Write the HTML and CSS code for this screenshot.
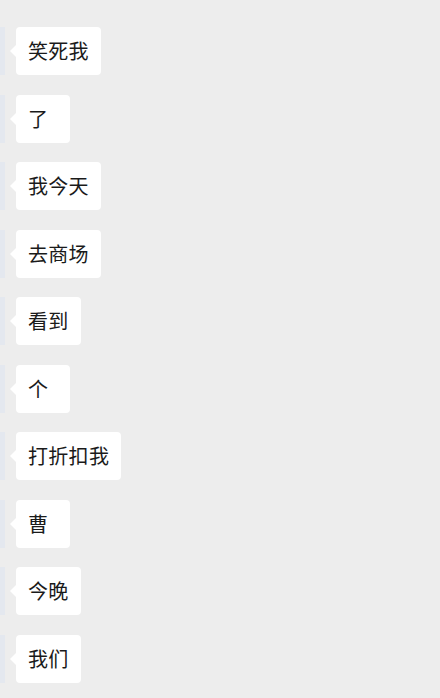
FILE: index.html
```html
<!DOCTYPE html>
<html lang="zh-CN">
<head>
    <meta charset="UTF-8">
    <meta name="viewport" content="width=device-width, initial-scale=1.0">
    <title>聊天</title>
    <link rel="stylesheet" href="styles.css">
</head>
<body>
    <div class="chat">
        <div class="row"><div class="avatar"></div><div class="bubble">笑死我</div></div>
        <div class="row"><div class="avatar"></div><div class="bubble">了</div></div>
        <div class="row"><div class="avatar"></div><div class="bubble">我今天</div></div>
        <div class="row"><div class="avatar"></div><div class="bubble">去商场</div></div>
        <div class="row"><div class="avatar"></div><div class="bubble">看到</div></div>
        <div class="row"><div class="avatar"></div><div class="bubble">个</div></div>
        <div class="row"><div class="avatar"></div><div class="bubble">打折扣我</div></div>
        <div class="row"><div class="avatar"></div><div class="bubble">曹</div></div>
        <div class="row"><div class="avatar"></div><div class="bubble">今晚</div></div>
        <div class="row"><div class="avatar"></div><div class="bubble">我们</div></div>
    </div>
</body>
</html>
```

FILE: styles.css
```css
body {
    margin: 0;
    background: #ededed;
    font-family: "Noto Sans CJK SC", "Noto Sans", sans-serif;
    height: 698px;
    overflow: hidden;
}
.chat {
    display: flex;
    flex-direction: column;
    gap: 19.5px;
    padding-top: 27px;
}
.row {
    display: flex;
    align-items: flex-start;
}
.avatar {
    width: 5px;
    height: 48px;
    background: #e4e8ef;
    margin-right: 11px;
}
.bubble {
    position: relative;
    background: #fff;
    color: #1a1a1a;
    font-size: 20px;
    height: 48px;
    line-height: 48px;
    padding: 0 12px;
    min-width: 30px;
    border-radius: 4px;
    letter-spacing: 0.3px;
}
.bubble::before {
    content: "";
    position: absolute;
    left: -6px;
    top: 18px;
    border-top: 6px solid transparent;
    border-bottom: 6px solid transparent;
    border-right: 6px solid #fff;
}
```
